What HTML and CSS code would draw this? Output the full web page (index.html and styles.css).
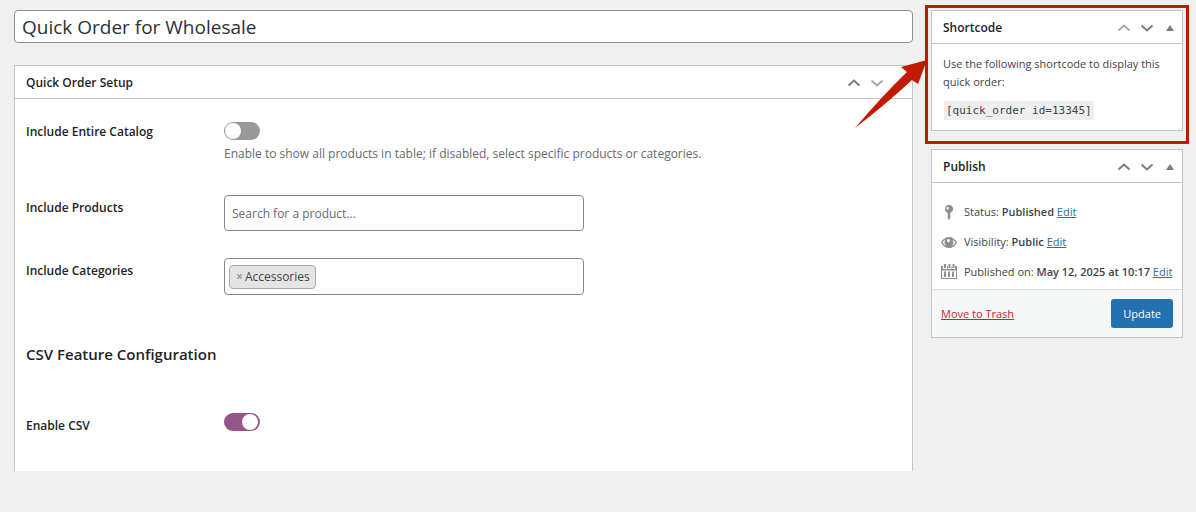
FILE: index.html
```html
<!DOCTYPE html>
<html lang="en">
<head>
<meta charset="utf-8">
<title>Quick Order for Wholesale</title>
<link rel="stylesheet" href="styles.css">
</head>
<body>
<div class="editor">
  <main class="primary">
    <input class="title-input" type="text" aria-label="Title" value="Quick Order for Wholesale">
    <section class="box box-open">
      <header class="box-header">
        <h2 class="box-title">Quick Order Setup</h2>
        <div class="box-actions box-actions-inset">
          <button class="icon-button" type="button" aria-label="Move up"><svg width="14" height="10" viewBox="0 0 14 10"><path class="chevron" d="M1.500 7.500 7 2.500 12.500 7.500"/></svg></button>
          <button class="icon-button icon-button-muted" type="button" aria-label="Move down"><svg width="14" height="10" viewBox="0 0 14 10"><path class="chevron" d="M1.500 2.500 7 7.500 12.500 2.500"/></svg></button>
        </div>
      </header>
      <form class="settings">
        <div class="row">
          <label class="row-label" for="catalog">Include Entire Catalog</label>
          <div class="row-field">
            <input class="toggle" id="catalog" type="checkbox">
            <p class="hint">Enable to show all products in table; if disabled, select specific products or categories.</p>
          </div>
        </div>
        <div class="row row-products">
          <label class="row-label row-label-low" for="products">Include Products</label>
          <input class="picker" id="products" type="text" placeholder="Search for a product...">
        </div>
        <div class="row row-categories">
          <label class="row-label row-label-low" for="categories">Include Categories</label>
          <div class="picker picker-tags">
            <span class="tag"><button class="tag-remove" type="button" aria-label="Remove Accessories">×</button>Accessories</span>
            <input class="tag-input" id="categories" type="text">
          </div>
        </div>
        <h3 class="settings-heading">CSV Feature Configuration</h3>
        <div class="row">
          <label class="row-label row-label-low" for="csv">Enable CSV</label>
          <div class="row-field"><input class="toggle" id="csv" type="checkbox" checked></div>
        </div>
      </form>
    </section>
  </main>

  <aside class="sidebar">
    <div class="highlighted">
      <section class="box">
        <header class="box-header">
          <h2 class="box-title">Shortcode</h2>
          <div class="box-actions">
            <button class="icon-button icon-button-muted" type="button" aria-label="Move up"><svg width="14" height="10" viewBox="0 0 14 10"><path class="chevron" d="M1.500 7.500 7 2.500 12.500 7.500"/></svg></button>
            <button class="icon-button" type="button" aria-label="Move down"><svg width="14" height="10" viewBox="0 0 14 10"><path class="chevron" d="M1.500 2.500 7 7.500 12.500 2.500"/></svg></button>
            <button class="icon-button" type="button" aria-label="Toggle panel"><svg width="8" height="6" viewBox="0 0 8 6"><path class="solid" d="M0 6 4 0 8 6Z"/></svg></button>
          </div>
        </header>
        <div class="shortcode">
          <p class="shortcode-text">Use the following shortcode to display this quick order:</p>
          <code class="code">[quick_order id=13345]</code>
        </div>
      </section>
      <div class="frame"></div>
      <svg class="arrow" width="74" height="72" viewBox="0 0 74 72" aria-hidden="true"><path d="M73 1 47 8 53 13Q28 37 1 69 31 46 58 21L64 25Z"/></svg>
    </div>

    <section class="box">
      <header class="box-header">
        <h2 class="box-title">Publish</h2>
        <div class="box-actions">
          <button class="icon-button" type="button" aria-label="Move up"><svg width="14" height="10" viewBox="0 0 14 10"><path class="chevron" d="M1.500 7.500 7 2.500 12.500 7.500"/></svg></button>
          <button class="icon-button" type="button" aria-label="Move down"><svg width="14" height="10" viewBox="0 0 14 10"><path class="chevron" d="M1.500 2.500 7 7.500 12.500 2.500"/></svg></button>
          <button class="icon-button" type="button" aria-label="Toggle panel"><svg width="8" height="6" viewBox="0 0 8 6"><path class="solid" d="M0 6 4 0 8 6Z"/></svg></button>
        </div>
      </header>
      <ul class="facts">
        <li class="fact">
          <svg class="fact-icon" width="16" height="16" viewBox="0 0 16 16"><path fill-rule="evenodd" d="M8 1a4 4 0 0 1 1.300 7.800V14L8 16 6.700 14V8.800A4 4 0 0 1 8 1ZM6.500 3A1.200 1.200 0 0 0 6.500 5.400 1.200 1.200 0 0 0 6.500 3Z"/></svg>
          <span>Status: <b>Published</b> <a href="#status">Edit</a></span>
        </li>
        <li class="fact">
          <svg class="fact-icon" width="16" height="16" viewBox="0 0 16 16"><path fill-rule="evenodd" d="M0 8.500Q3 3 8 3T16 8.500Q13 14 8 14T0 8.500ZM1.600 8.500Q3 11 5 11.800A4.400 4.400 0 0 1 5 5.200Q3 6 1.600 8.500ZM14.400 8.500Q13 6 11 5.200A4.400 4.400 0 0 1 11 11.800Q13 11 14.400 8.500ZM7.500 5A1.600 1.600 0 0 0 7.500 8.200 1.600 1.600 0 0 0 7.500 5Z"/></svg>
          <span>Visibility: <b>Public</b> <a href="#visibility">Edit</a></span>
        </li>
        <li class="fact">
          <svg class="fact-icon" width="16" height="16" viewBox="0 0 16 16"><path fill-rule="evenodd" d="M0 2H2V5H6V2H7V5H10V2H10.500V5H14V2H16V15H0ZM1 6.500V14H15V6.500Z"/><path d="M3 0H5V4H3ZM7.500 0H9.500V4H7.500ZM11.500 0H13.500V4H11.500ZM3 7.500H5V13H3ZM7 7.500H9V13H7ZM11 7.500H13V13H11Z"/></svg>
          <span>Published on: <b>May 12, 2025 at 10:17</b> <a href="#date">Edit</a></span>
        </li>
      </ul>
      <footer class="publish-footer">
        <a class="trash" href="#trash">Move to Trash</a>
        <button class="update" type="submit">Update</button>
      </footer>
    </section>
  </aside>
</div>
</body>
</html>
```
FILE: styles.css
```css
* { box-sizing: border-box; }

body {
  margin: 0;
  background: #f0f0f1;
  color: #3c434a;
  font: 12px/18px "Open Sans", "Noto Sans", sans-serif;
}

h2, h3, p, ul { margin: 0; padding: 0; }
input, button { font: inherit; color: inherit; }
button { cursor: pointer; }
a { color: #2271b1; }
b { font-weight: 600; }

.editor {
  display: grid;
  grid-template-columns: 1fr 252px;
  gap: 18px;
  align-items: start;
  padding: 10px 13px 40px 14px;
}

.primary { min-width: 0; }

.title-input {
  display: block;
  width: 100%;
  height: 33px;
  margin-bottom: 22px;
  padding: 1px 7px 0;
  border: 1px solid #8c8f94;
  border-radius: 4px;
  background: #fff;
  color: #2c3338;
  font-size: 19px;
}

.box {
  border: 1px solid #c3c4c7;
  background: #fff;
}
.box-open { border-bottom: 0; }

.box-header {
  display: flex;
  align-items: center;
  justify-content: space-between;
  height: 33px;
  padding: 1px 5px 0 11px;
  border-bottom: 1px solid #c3c4c7;
}
.box-title {
  color: #1d2327;
  font-size: 12px;
  font-weight: 600;
}

.box-actions { display: flex; gap: 9px; }
.box-actions-inset { padding-right: 23px; }
.icon-button {
  display: flex;
  align-items: center;
  justify-content: center;
  width: 14px;
  padding: 0;
  border: 0;
  background: none;
  color: #787c82;
}
.icon-button-muted { color: #a7aaad; }
.chevron { fill: none; stroke: currentColor; stroke-width: 2; }
.solid { fill: currentColor; }

.settings { padding: 23px 11px 36px; }
.row {
  display: grid;
  grid-template-columns: 198px 1fr;
  align-items: start;
}
.row-products { margin-top: 32px; }
.row-categories { margin-top: 27px; }
.row-label { padding-top: 1px; color: #1d2327; font-weight: 600; }
.row-label-low { padding-top: 4px; }

.toggle {
  display: block;
  appearance: none;
  width: 36px;
  height: 18px;
  margin: 0;
  padding: 1px;
  border-radius: 9px;
  background: #999;
}
.toggle::before {
  content: "";
  display: block;
  width: 16px;
  height: 16px;
  border-radius: 50%;
  background: #fff;
}
.toggle:checked { padding-left: 18px; background: #935687; }

.hint { margin-top: 5px; color: #646970; }

.picker {
  width: 100%;
  max-width: 360px;
  height: 36px;
  padding: 0 7px;
  border: 1px solid #7e8993;
  border-radius: 4px;
  background: #fff;
}
.picker::placeholder { color: #646970; opacity: 1; }
.picker-tags {
  display: flex;
  align-items: center;
  gap: 4px;
  height: 37px;
  padding: 0 4px;
}
.tag {
  display: flex;
  align-items: center;
  gap: 2px;
  height: 24px;
  padding: 0 5px 0 6px;
  border: 1px solid #aaa;
  border-radius: 4px;
  background: #e4e4e4;
}
.tag-remove {
  padding: 0;
  border: 0;
  background: none;
  color: #999;
  font-weight: 700;
}
.tag-input {
  flex: 1;
  min-width: 0;
  border: 0;
  outline: 0;
  background: none;
}

.settings-heading {
  margin: 49px 0;
  color: #1d2327;
  font-size: 15px;
  font-weight: 600;
  line-height: 20px;
}

.sidebar {
  display: flex;
  flex-direction: column;
  gap: 18px;
  font-size: 11px;
}

.highlighted { position: relative; }
.frame {
  position: absolute;
  inset: -5px -6px -13px;
  border: 3px solid #c21a00;
  pointer-events: none;
}
.arrow {
  position: absolute;
  top: 49px;
  left: -77px;
  fill: #c21a00;
  pointer-events: none;
}

.shortcode { padding: 11px 11px 10px; }
.shortcode-text { margin-bottom: 10px; }
.code {
  display: block;
  width: fit-content;
  margin-left: 1px;
  padding: 0 2px;
  background: #eee;
  font: 11px/19px "DejaVu Sans Mono", monospace;
}

.facts {
  display: grid;
  gap: 12px;
  padding: 20px 9px 8px;
  list-style: none;
}
.fact {
  display: flex;
  align-items: center;
  gap: 7px;
  white-space: nowrap;
}
.fact-icon { flex: none; fill: #8c8f94; }

.publish-footer {
  display: flex;
  align-items: center;
  justify-content: space-between;
  padding: 9px;
  border-top: 1px solid #dcdcde;
  background: #f6f7f7;
}
.trash { color: #b32d2e; }
.update {
  height: 29px;
  padding: 0 12px;
  border: 0;
  border-radius: 3px;
  background: #2271b1;
  color: #fff;
}
```
